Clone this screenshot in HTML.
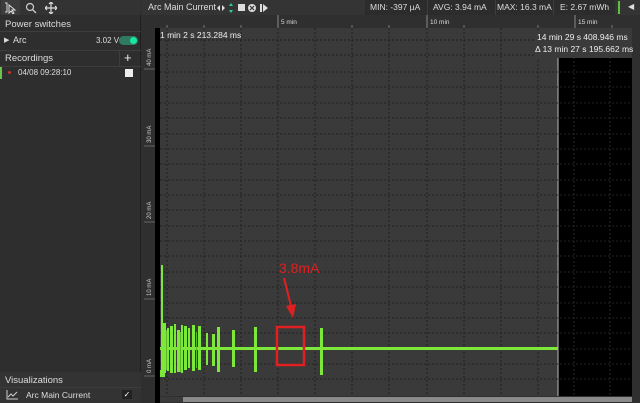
<!DOCTYPE html>
<html><head><meta charset="utf-8"><style>
*{margin:0;padding:0;box-sizing:border-box}
body{width:640px;height:403px;overflow:hidden;background:#2f2f2f;font-family:"Liberation Sans",sans-serif;color:#ddd;font-size:9px;position:relative}
.a{position:absolute;white-space:nowrap}
</style></head><body>
<div class="a" style="left:0;top:0;width:141px;height:403px;background:#2e2e2e;border-right:1px solid #1f1f1f"></div>
<div class="a" style="left:0;top:0;width:141px;height:15px;background:#333"></div>
<div class="a" style="left:1px;top:0;width:19px;height:15px;background:#3c3c3c"></div>
<svg class="a" style="left:4px;top:2px" width="13" height="12"><path d="M1 1H3V10H1M5 3L5 11L7 9L9 12L10 11L8 8H11Z" stroke="#ddd" fill="none" stroke-width="1"/></svg>
<svg class="a" style="left:25px;top:2px" width="12" height="12"><circle cx="5" cy="5" r="3.5" stroke="#ccc" fill="none" stroke-width="1.2"/><line x1="7.5" y1="7.5" x2="11" y2="11" stroke="#ccc" stroke-width="1.3"/></svg>
<svg class="a" style="left:45px;top:2px" width="12" height="12"><path d="M6 0V12M0 6H12M4 2L6 0L8 2M4 10L6 12L8 10M2 4L0 6L2 8M10 4L12 6L10 8" stroke="#ddd" fill="none" stroke-width="1.2"/></svg>
<div class="a" style="left:5px;top:19px;font-size:9.5px">Power switches</div>
<div class="a" style="left:0;top:31px;width:141px;height:1px;background:#3d3d3d"></div>
<div class="a" style="left:4px;top:36px;font-size:7px">▶</div>
<div class="a" style="left:13px;top:35px;font-size:9px">Arc</div>
<div class="a" style="left:96px;top:36px;font-size:8px">3.02 V</div>
<div class="a" style="left:119px;top:36px;width:19px;height:9px;border-radius:5px;background:#2e7a63"></div>
<div class="a" style="left:130px;top:37px;width:7px;height:7px;border-radius:50%;background:#19e6a0"></div>
<div class="a" style="left:0;top:50px;width:141px;height:1px;background:#3d3d3d"></div>
<div class="a" style="left:5px;top:53px;font-size:9.5px">Recordings</div>
<div class="a" style="left:119px;top:50px;width:1px;height:16px;background:#3d3d3d"></div>
<div class="a" style="left:124px;top:50px;font-size:13px;color:#eee">+</div>
<div class="a" style="left:0;top:66px;width:141px;height:1px;background:#3d3d3d"></div>
<div class="a" style="left:0;top:67px;width:2px;height:12px;background:#6cc24a"></div>
<div class="a" style="left:8px;top:71px;width:3px;height:3px;border-radius:50%;background:#d03030"></div>
<div class="a" style="left:18px;top:68px;font-size:8px">04/08 09:28:10</div>
<div class="a" style="left:125px;top:69px;width:8px;height:8px;background:#eee"></div>
<div class="a" style="left:0;top:372px;width:141px;height:31px;background:#333"></div>
<div class="a" style="left:5px;top:375px;font-size:9.5px">Visualizations</div>
<div class="a" style="left:0;top:387px;width:141px;height:1px;background:#3d3d3d"></div>
<svg class="a" style="left:6px;top:390px" width="12" height="10"><path d="M1 0V9H12M2 7L5 4L7 6L11 2" stroke="#ccc" fill="none"/></svg>
<div class="a" style="left:26px;top:390px;font-size:8.5px">Arc Main Current</div>
<div class="a" style="left:122px;top:390px;width:10px;height:9px;background:#222;color:#fff;font-size:8px;line-height:9px;text-align:center">✓</div>

<div class="a" style="left:142px;top:0;width:498px;height:15px;background:#343434"></div>
<div class="a" style="left:148px;top:2px;font-size:9px;color:#ddd">Arc Main Current</div>
<svg class="a" style="left:217px;top:3px" width="58" height="10">
<path d="M0 5L3 2V8ZM8 5L5 2V8Z" fill="#ddd"/>
<path d="M14 0L16 3H12ZM14 10L16 7H12Z" fill="#2bd19a"/>
<rect x="21" y="1" width="7" height="7" fill="#ddd"/>
<circle cx="35" cy="5" r="4" fill="#ddd"/><path d="M33 3L37 7M37 3L33 7" stroke="#333" stroke-width="1.2"/>
<rect x="43" y="1" width="2" height="8" fill="#ddd"/><path d="M46 1L51 5L46 9Z" fill="#ddd"/>
</svg>
<div class="a" style="left:365px;top:0;width:250px;height:15px;background:#2c2c2c"></div>
<div class="a" style="left:370px;top:2px;font-size:8.5px">MIN: -397 µA</div>
<div class="a" style="left:427px;top:0;width:1px;height:15px;background:#3d3d3d"></div>
<div class="a" style="left:433px;top:2px;font-size:8.5px">AVG: 3.94 mA</div>
<div class="a" style="left:495px;top:0;width:1px;height:15px;background:#3d3d3d"></div>
<div class="a" style="left:497px;top:2px;font-size:8.5px">MAX: 16.3 mA</div>
<div class="a" style="left:553px;top:0;width:1px;height:15px;background:#3d3d3d"></div>
<div class="a" style="left:560px;top:2px;font-size:8.5px">E: 2.67 mWh</div>
<div class="a" style="left:618px;top:1px;width:2px;height:13px;background:#5cc23a"></div>
<div class="a" style="left:628px;top:2px;font-size:8px">◀</div>

<div class="a" style="left:142px;top:15px;width:498px;height:13px;background:#2f2f2f"></div>

<svg class="a" style="left:0;top:0" width="640" height="403">
<rect x="142" y="28" width="13" height="375" fill="#2f2f2f"/>
<rect x="155" y="28" width="5" height="375" fill="#000"/>
<rect x="160" y="28" width="398" height="368" fill="#3a3a3a"/>
<rect x="558" y="57" width="74" height="339" fill="#000"/>
<rect x="558" y="28" width="74" height="29" fill="#3a3a3a"/>
<rect x="632" y="15" width="8" height="388" fill="#2f2f2f"/>
<line x1="558" y1="57" x2="558" y2="396" stroke="#bbb" stroke-width="1"/>
<g stroke="#1e1e1e" stroke-width="0.9" stroke-dasharray="2,2">
<line x1="167" y1="28" x2="167" y2="396"/><line x1="204" y1="28" x2="204" y2="396"/><line x1="241" y1="28" x2="241" y2="396"/><line x1="278" y1="28" x2="278" y2="396"/><line x1="315" y1="28" x2="315" y2="396"/><line x1="352" y1="28" x2="352" y2="396"/><line x1="389" y1="28" x2="389" y2="396"/><line x1="427" y1="28" x2="427" y2="396"/><line x1="464" y1="28" x2="464" y2="396"/><line x1="501" y1="28" x2="501" y2="396"/><line x1="538" y1="28" x2="538" y2="396"/>
<line x1="160" y1="40" x2="632" y2="40"/><line x1="160" y1="55" x2="632" y2="55"/>
</g>
<g stroke="#333" stroke-width="0.8" stroke-dasharray="2,2">
<line x1="574" y1="57" x2="574" y2="396"/><line x1="610" y1="57" x2="610" y2="396"/>
</g>
<g stroke="#222" stroke-width="0.9" stroke-dasharray="2,2">
<line x1="160" y1="72" x2="632" y2="72"/><line x1="160" y1="87" x2="632" y2="87"/><line x1="160" y1="103" x2="632" y2="103"/><line x1="160" y1="118" x2="632" y2="118"/><line x1="160" y1="134" x2="632" y2="134"/><line x1="160" y1="149" x2="632" y2="149"/><line x1="160" y1="164" x2="632" y2="164"/><line x1="160" y1="180" x2="632" y2="180"/><line x1="160" y1="195" x2="632" y2="195"/><line x1="160" y1="210" x2="632" y2="210"/><line x1="160" y1="226" x2="632" y2="226"/><line x1="160" y1="241" x2="632" y2="241"/><line x1="160" y1="256" x2="632" y2="256"/><line x1="160" y1="272" x2="632" y2="272"/><line x1="160" y1="287" x2="632" y2="287"/><line x1="160" y1="303" x2="632" y2="303"/><line x1="160" y1="318" x2="632" y2="318"/><line x1="160" y1="333" x2="632" y2="333"/><line x1="160" y1="349" x2="632" y2="349"/><line x1="160" y1="364" x2="632" y2="364"/><line x1="160" y1="379" x2="632" y2="379"/>
</g>
<g stroke="#888"><line x1="278" y1="15" x2="278" y2="28"/><line x1="427" y1="15" x2="427" y2="28"/><line x1="575" y1="15" x2="575" y2="28"/></g>
<g stroke="#777"><line x1="167" y1="25" x2="167" y2="28"/><line x1="204" y1="25" x2="204" y2="28"/><line x1="241" y1="25" x2="241" y2="28"/><line x1="352" y1="25" x2="352" y2="28"/><line x1="389" y1="25" x2="389" y2="28"/><line x1="464" y1="25" x2="464" y2="28"/><line x1="538" y1="25" x2="538" y2="28"/><line x1="612" y1="25" x2="612" y2="28"/></g>
<g font-family="Liberation Sans" font-size="6.5" fill="#ddd"><text x="281" y="24">5 min</text><text x="430" y="24">10 min</text><text x="578" y="24">15 min</text></g>
<g stroke="#666"><line x1="144" y1="69" x2="155" y2="69"/><line x1="144" y1="146" x2="155" y2="146"/><line x1="144" y1="222" x2="155" y2="222"/><line x1="144" y1="299" x2="155" y2="299"/><line x1="144" y1="376" x2="155" y2="376"/></g>
<g font-family="Liberation Sans" font-size="6" fill="#ccc">
<text transform="translate(151,66) rotate(-90)">40 mA</text><text transform="translate(151,143) rotate(-90)">30 mA</text><text transform="translate(151,219) rotate(-90)">20 mA</text><text transform="translate(151,296) rotate(-90)">10 mA</text><text transform="translate(151,373) rotate(-90)">0 mA</text>
</g>
<g fill="#7ee83a">
<rect x="160" y="347" width="398" height="3"/>
<rect x="160" y="370" width="5" height="7"/>
<rect x="161" y="265" width="2" height="110"/>
<rect x="163" y="323" width="3" height="50"/><rect x="167" y="328" width="2" height="43"/><rect x="170" y="326" width="3" height="47"/><rect x="174" y="324" width="2" height="49"/><rect x="177" y="330" width="3" height="42"/><rect x="181" y="325" width="2" height="48"/><rect x="184" y="326" width="3" height="44"/><rect x="188" y="328" width="2" height="40"/>
<rect x="192" y="325" width="3" height="46"/><rect x="198" y="326" width="3" height="44"/>
<rect x="206" y="333" width="2" height="32"/><rect x="212" y="334" width="3" height="32"/><rect x="217" y="327" width="3" height="45"/>
<rect x="232" y="330" width="3" height="37"/><rect x="254" y="327" width="3" height="45"/><rect x="320" y="328" width="3" height="47"/>
</g>
<g fill="#5cb82a"><rect x="166" y="330" width="1" height="40"/><rect x="180" y="332" width="1" height="40"/><rect x="196" y="332" width="1" height="36"/></g>
<rect x="183" y="397" width="449" height="5" fill="#8a8a8a"/>
<rect x="160" y="397" width="23" height="5" fill="#3a3a3a"/>
<rect x="277" y="327" width="27" height="38" fill="none" stroke="#e02020" stroke-width="2.5"/>
<line x1="284" y1="278" x2="292" y2="310" stroke="#e02020" stroke-width="2"/>
<polygon points="286,306 296,304 293,318" fill="#e02020"/>
<text x="279" y="273" font-family="Liberation Sans" font-size="14" fill="#e02020">3.8mA</text>
</svg>
<div class="a" style="left:160px;top:30px;font-size:8.5px;color:#eee">1 min 2 s 213.284 ms</div>
<div class="a" style="left:536px;top:30px;width:96px;height:28px;background:#3a3a3a"></div>
<div class="a" style="left:537px;top:32px;font-size:8.5px;color:#eee">14 min 29 s 408.946 ms</div>
<div class="a" style="left:535px;top:44px;font-size:8.5px;color:#eee">Δ 13 min 27 s 195.662 ms</div>
</body></html>
